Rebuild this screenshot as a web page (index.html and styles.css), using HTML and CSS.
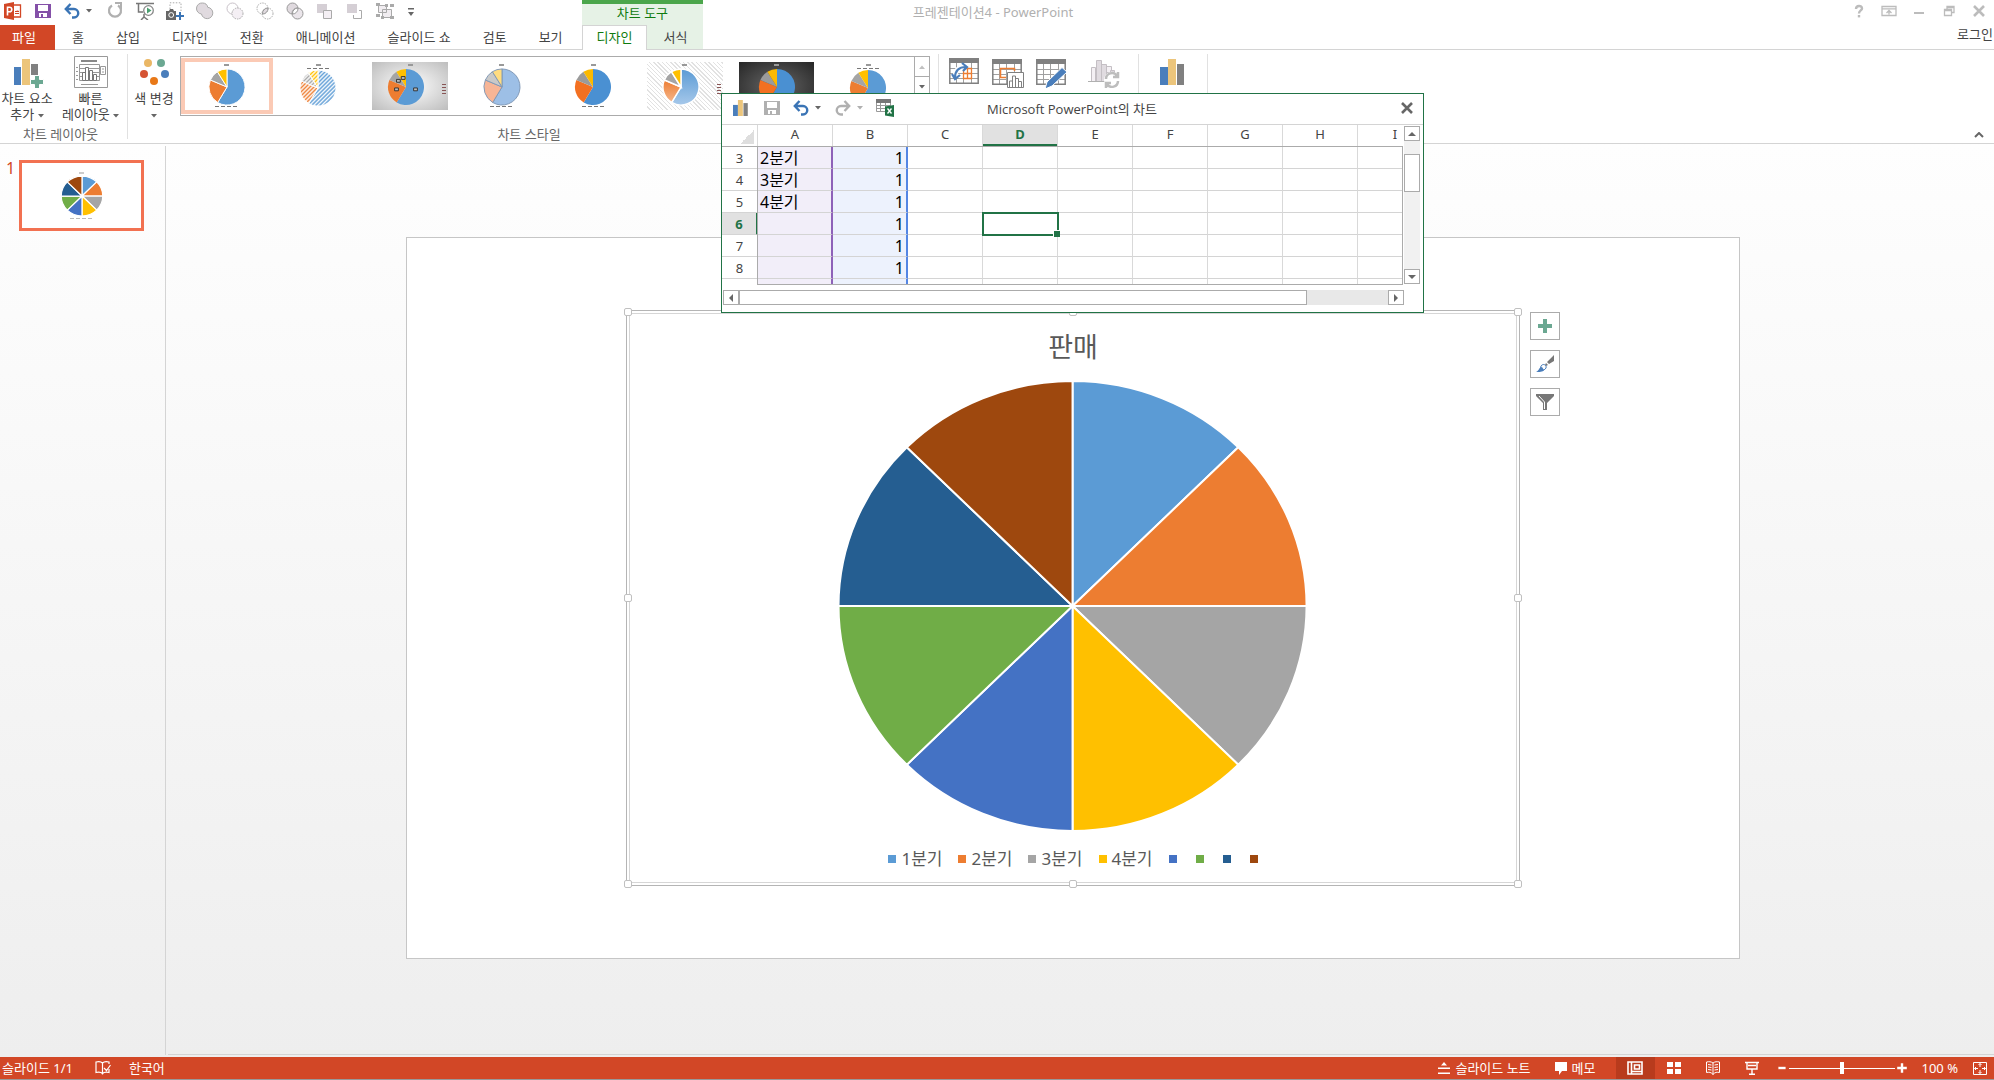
FILE: index.html
```html
<!DOCTYPE html>
<html lang="ko">

<head>
    <meta charset="UTF-8">
    <meta name="viewport" content="width=device-width, initial-scale=1.0">
    <title>프레젠테이션4 - PowerPoint</title>
    <link rel="stylesheet" href="styles.css">
</head>

<body>

    <!-- 공용 아이콘 -->
    <svg class="defs" aria-hidden="true">
        <defs>
            <linearGradient id="softBlue" x1="0" y1="0" x2="0" y2="1">
                <stop offset="0" stop-color="#5b9bd5" />
                <stop offset="1" stop-color="#a6c8ea" />
            </linearGradient>
            <linearGradient id="softOrange" x1="0" y1="0" x2="0" y2="1">
                <stop offset="0" stop-color="#ed7d31" />
                <stop offset="1" stop-color="#f5b78e" />
            </linearGradient>
            <pattern id="stripes" width="3" height="3" patternUnits="userSpaceOnUse" patternTransform="rotate(45)">
                <rect width="1.5" height="3" fill="#fff" />
            </pattern>
        </defs>
        <symbol id="pie4" viewBox="-20 -20 40 40">
            <path class="s1" d="M0 0V-19A19 19 0 1 1-9.8 16.3Z" />
            <path class="s2" d="M0 0-9.8 16.3A19 19 0 0 1-17.5-7.4Z" />
            <path class="s3" d="M0 0-17.5-7.4A19 19 0 0 1-10.1-16.1Z" />
            <path class="s4" d="M0 0-10.1-16.1A19 19 0 0 1 0-19Z" />
        </symbol>
        <symbol id="pie8" viewBox="-233 -224 466 448">
            <g stroke="#fff" stroke-linejoin="round">
                <path fill="#5b9bd5" d="M0 0V-224A233 224 0 0 1 165-158Z" />
                <path fill="#ed7d31" d="M0 0 165-158A233 224 0 0 1 233 0Z" />
                <path fill="#a5a5a5" d="M0 0H233A233 224 0 0 1 165 158Z" />
                <path fill="#ffc000" d="M0 0 165 158A233 224 0 0 1 0 224Z" />
                <path fill="#4472c4" d="M0 0V224A233 224 0 0 1-165 158Z" />
                <path fill="#70ad47" d="M0 0-165 158A233 224 0 0 1-233 0Z" />
                <path fill="#255e91" d="M0 0H-233A233 224 0 0 1-165-158Z" />
                <path fill="#9e480e" d="M0 0-165-158A233 224 0 0 1 0-224Z" />
            </g>
        </symbol>
        <symbol id="bars" viewBox="0 0 26 26">
            <path fill="#4a7ebb" d="M0 8h8v18H0z" />
            <path fill="#ecc57b" d="M8 0h8v26H8z" />
            <path fill="#808080" d="M17 5h7v21h-7z" />
        </symbol>
        <symbol id="save" viewBox="0 0 16 16">
            <path fill="currentColor" fill-rule="evenodd" d="M0 1h16v14H0zM3 2v6h10V2zM4 10v4h2v-3h2v3h4v-4z" />
        </symbol>
        <symbol id="undo" viewBox="0 0 16 16">
            <path fill="none" stroke="currentColor" stroke-width="2.4" d="M1.500 6H10a4 4 0 0 1 0 8.500H8M6.500 1 1.800 6l4.700 5" />
        </symbol>
        <symbol id="caret" viewBox="0 0 6 4">
            <path fill="currentColor" d="M0 0h6L3 3.500z" />
        </symbol>
        <symbol id="cross" viewBox="0 0 12 12">
            <path fill="none" stroke="currentColor" stroke-width="2.600" d="m1 1 10 10M11 1 1 11" />
        </symbol>
        <symbol id="grid" viewBox="0 0 30 26">
            <path fill="#fff" d="M0 0h30v26H0z" />
            <path fill="none" stroke="#a0a0a0" d="M7.500 5v20M14.500 5v20M22.500 5v20M1 10.500h28M1 15.500h28M1 20.500h28" />
            <path fill="none" stroke="#808080" stroke-width="1.500" d="M.8.800h28.400v24.400H.8z" />
            <path fill="#808080" d="M0 0h30v5H0z" />
        </symbol>
    </svg>

    <!-- 제목 표시줄과 탭 -->
    <header class="header">
        <div class="quick-access">
            <svg class="icon" viewBox="0 0 18 18">
                <path fill="#fff" stroke="#d24726" stroke-width="1.300" d="M9 3h7.500v12H9z" />
                <path stroke="#d24726" d="M11 9.500h4M11 11.500h4" />
                <path fill="#d24726" d="M12 5v3h3a3 3 0 0 1-3 0M0 2l10-2v18L0 16z" />
                <path fill="none" stroke="#fff" stroke-width="1.600" d="M3.500 13.500V5.200h2a2.200 2.200 0 0 1 0 4.600h-2" />
            </svg>
            <button class="tool purple" aria-label="저장"><svg class="icon"><use href="#save" /></svg></button>
            <button class="tool undo blue" aria-label="실행 취소"><svg class="icon"><use href="#undo" /></svg><svg class="caret"><use href="#caret" /></svg></button>
            <button class="tool gray" aria-label="다시 실행"><svg class="icon" viewBox="0 0 18 18"><path fill="none" stroke="currentColor" stroke-width="2.200" d="M6 3.500a6 6 0 1 0 6 0" /><path fill="currentColor" d="M9 0h7v7h-2V2H9z" /></svg></button>
            <button class="tool" aria-label="처음부터 시작"><svg class="icon" viewBox="0 0 18 18"><path fill="none" stroke="#777" stroke-width="1.500" d="M0 1.500h18M2.500 2v8H7M8 12v3l-3 3M8 15l4 3" /><circle cx="12.500" cy="8.500" r="4.800" fill="#fff" stroke="#888" stroke-width="1.300" /><path fill="#4c9f70" d="m11 5.500 4.500 3-4.500 3z" /></svg></button>
            <button class="tool" aria-label="스크린샷"><svg class="icon" viewBox="0 0 18 18"><path fill="none" stroke="#aaa" stroke-dasharray="1.500 1.500" d="M4 7V.800h11V9" /><path fill="#666" d="M0 9h3l1-2h3l1 2h2v9H0z" /><circle cx="5.200" cy="13" r="2.400" fill="#666" stroke="#fff" /><path fill="#3a74b5" d="M13 10h2v3h3v2h-3v3h-2v-3h-3v-2h3z" /></svg></button>
            <button class="tool" aria-label="도형 병합"><svg class="icon" viewBox="0 0 18 18"><path fill="#e0dadf" stroke="#aaa" d="M6.500 1a5.500 5.500 0 0 1 5.300 4.300A5.700 5.700 0 1 1 5.500 12 5.500 5.500 0 0 1 6.500 1z" /></svg></button>
            <button class="tool" aria-label="도형 결합"><svg class="icon" viewBox="0 0 18 18"><circle cx="6.500" cy="6.500" r="5.500" fill="none" stroke="#c9c2c9" /><circle cx="11.500" cy="11.500" r="5.500" fill="#f4eff4" stroke="#aaa" stroke-dasharray="1.500 1" /></svg></button>
            <button class="tool" aria-label="도형 교차"><svg class="icon" viewBox="0 0 18 18"><circle cx="6.500" cy="6.500" r="5.500" fill="none" stroke="#aaa" stroke-dasharray="1.500 1" /><circle cx="11.500" cy="11.500" r="5.500" fill="none" stroke="#aaa" stroke-dasharray="1.500 1" /><path fill="#e0dadf" stroke="#999" d="M6.500 12A5.500 5.500 0 0 1 12 6a5.500 5.500 0 0 1-5.500 6z" /></svg></button>
            <button class="tool" aria-label="도형 빼기"><svg class="icon" viewBox="0 0 18 18"><circle cx="6.500" cy="6.500" r="5.500" fill="#e0dadf" stroke="#999" /><circle cx="11.500" cy="11.500" r="5.500" fill="#ebe6eb" stroke="#999" /><path fill="#fff" stroke="#999" d="M6.500 12A5.500 5.500 0 0 1 12 6a5.500 5.500 0 0 1-5.500 6z" /></svg></button>
            <button class="tool" aria-label="앞으로 가져오기"><svg class="icon" viewBox="0 0 18 18"><path fill="#d5cfd5" d="M1 2h10v9H1z" /><path fill="#f4eff4" stroke="#aaa" d="M7.500 8.500h8v8h-8z" /></svg></button>
            <button class="tool" aria-label="뒤로 보내기"><svg class="icon" viewBox="0 0 18 18"><path fill="#d5cfd5" d="M1 2h10v9H1z" /><path fill="none" stroke="#aaa" d="M13 8.500h2.500v8h-8V13" /></svg></button>
            <button class="tool" aria-label="그룹"><svg class="icon" viewBox="0 0 18 18"><path fill="#f1edf1" stroke="#aaa" d="M2.500 3.500h8v7h-8zM6.500 7.500h9v8h-9z" /><path fill="#aaa" d="M0 1h4v3H0zM14 2h4v3h-4zM0 12h4v3H0zM5 14h3v3H5zM14 14h4v3h-4zM9 2h3v3H9z" /></svg></button>
            <button class="tool dark" aria-label="빠른 실행 도구 모음 사용자 지정"><svg class="icon" viewBox="0 0 18 18"><path fill="currentColor" d="M6 6h6v1.500H6zM6 10h6l-3 4z" /></svg></button>
        </div>
        <div class="context-title">차트 도구</div>
        <h1 class="window-title">프레젠테이션4 - PowerPoint</h1>
        <div class="window-controls">
            <button class="tool" aria-label="도움말"><svg class="icon" viewBox="0 0 18 18"><path fill="none" stroke="currentColor" stroke-width="2.400" d="M6 7c0-4 6-4 6-.5 0 2-3 2-3 5" /><path fill="currentColor" d="M7.800 13h2.400v2.400H7.800z" /></svg></button>
            <button class="tool" aria-label="리본 메뉴 표시 옵션"><svg class="icon" viewBox="0 0 18 18"><path fill="none" stroke="currentColor" stroke-width="1.300" d="M2 4.500h14v9H2zM2 6.800h14M9 12.500V9M6.500 11 9 8.500l2.500 2.500" /></svg></button>
            <button class="tool" aria-label="최소화"><svg class="icon" viewBox="0 0 18 18"><path fill="currentColor" d="M4 10h10v2H4z" /></svg></button>
            <button class="tool" aria-label="이전 크기로"><svg class="icon" viewBox="0 0 18 18"><path fill="none" stroke="currentColor" stroke-width="1.300" d="M4.500 7.500h7v6h-7zM4.500 8.500h7M7 7V4.500h7v6h-2M7 5.500h7" /></svg></button>
            <button class="tool" aria-label="닫기"><svg class="close"><use href="#cross" /></svg></button>
        </div>
        <nav class="tabs">
            <a href="#" class="file">파일</a>
            <a href="#">홈</a>
            <a href="#">삽입</a>
            <a href="#">디자인</a>
            <a href="#">전환</a>
            <a href="#">애니메이션</a>
            <a href="#">슬라이드 쇼</a>
            <a href="#">검토</a>
            <a href="#">보기</a>
        </nav>
        <nav class="tabs context-tabs">
            <a href="#" class="active">디자인</a>
            <a href="#">서식</a>
        </nav>
        <a href="#" class="login">로그인</a>
    </header>

    <!-- 리본 메뉴 -->
    <section class="ribbon">
        <div class="group layout-group">
            <div class="group-items">
                <button class="big add-element">
                    <svg viewBox="0 0 32 32"><path fill="#4a7ebb" d="M3 11h7v18H3z" /><path fill="#ecc57b" d="M11 3h8v26h-8z" /><path fill="#808080" d="M20 8h7v11h-7z" /><path fill="#6ba892" stroke="#fff" d="M23.500 19.500h5v4h4v5h-4v4h-5v-4h-4v-5h4z" /></svg>
                    <span>차트 요소<br>추가 <svg class="caret"><use href="#caret" /></svg></span>
                </button>
                <button class="big quick-layout">
                    <svg viewBox="0 0 34 32"><path fill="#fff" stroke="#999" d="M.5.500h33v31H.5z" /><path stroke="#888" stroke-width="2" d="M7 5h16" /><path fill="none" stroke="#999" d="M5.500 8.500h20v16h-20zM6 12.500h19M6 16.500h19M6 20.500h19M2 11.500h2M2 15.500h2M2 19.500h2M2 23.500h2M7 28.500h17M26.500 10.500h5v8h-5zM28 13h2M28 16h2" /><path fill="#fff" stroke="#777" d="M8.500 16.500h3v8h-3zM11.500 11.500h3v13h-3zM15.500 14.500h3v10h-3zM19.500 18.500h3v6h-3z" /></svg>
                    <span>빠른<br>레이아웃 <svg class="caret"><use href="#caret" /></svg></span>
                </button>
            </div>
            <h2>차트 레이아웃</h2>
        </div>
        <span class="separator"></span>
        <div class="group style-group">
            <div class="group-items">
                <button class="big change-color">
                    <svg viewBox="0 0 32 32"><circle cx="10" cy="7" r="4" fill="#eab765" /><circle cx="23" cy="7" r="4" fill="#6ba892" /><circle cx="6" cy="18" r="4" fill="#d55434" /><circle cx="27" cy="18" r="4" fill="#4a7ebb" /><circle cx="16" cy="25" r="4" fill="#e87817" /></svg>
                    <span>색 변경<br><svg class="caret"><use href="#caret" /></svg></span>
                </button>
                <div class="gallery">
                    <button class="style selected" aria-label="스타일 1">
                        <i class="mini-title"></i><svg class="pie"><use href="#pie4" /></svg><i class="mini-legend"></i>
                    </button>
                    <button class="style" aria-label="스타일 2">
                        <i class="mini-title"></i><i class="mini-legend"></i><svg class="pie" viewBox="-20 -20 40 40"><use href="#pie4" x="-20" y="-20" width="40" height="40" /><circle r="20" fill="url(#stripes)" /></svg>
                    </button>
                    <button class="style silver" aria-label="스타일 3">
                        <i class="mini-title"></i><svg class="pie flat" viewBox="-20 -20 40 40"><use href="#pie4" x="-20" y="-20" width="40" height="40" /><path fill="#bbb" stroke="#333" d="M8 1h4v3H8zM-12 1h4v3h-4zM-10-8h4v3h-4zM-5-11h4v3h-4z" /></svg><i class="side-legend"></i>
                    </button>
                    <button class="style" aria-label="스타일 4">
                        <i class="mini-title"></i><svg class="pie pale"><use href="#pie4" /></svg><i class="mini-legend"></i>
                    </button>
                    <button class="style" aria-label="스타일 5">
                        <i class="mini-title"></i><svg class="pie vivid"><use href="#pie4" /></svg><i class="mini-legend"></i>
                    </button>
                    <button class="style hatched" aria-label="스타일 6">
                        <i class="mini-title"></i><svg class="pie" viewBox="-20 -20 40 40"><g stroke="#fff" stroke-width="1.500"><path fill="url(#softBlue)" d="M0 0V-19A19 19 0 1 1-9.800 16.300Z" /><path fill="url(#softOrange)" d="M0 0-9.800 16.300A19 19 0 0 1-17.500-7.400Z" /><path fill="#a5a5a5" d="M0 0-17.500-7.400A19 19 0 0 1-10.100-16.100Z" /><path fill="#ffc000" d="M0 0-10.100-16.100A19 19 0 0 1 0-19Z" /></g></svg><i class="side-legend"></i>
                    </button>
                    <button class="style black" aria-label="스타일 7">
                        <i class="mini-title"></i><svg class="pie vivid"><use href="#pie4" /></svg>
                    </button>
                    <button class="style" aria-label="스타일 8">
                        <i class="mini-title"></i><i class="mini-legend"></i><svg class="pie flat"><use href="#pie4" /></svg>
                    </button>
                    <div class="gallery-scroll">
                        <button class="up" aria-label="위로"><svg class="caret"><use href="#caret" /></svg></button>
                        <button aria-label="아래로"><svg class="caret"><use href="#caret" /></svg></button>
                        <button aria-label="자세히"></button>
                    </div>
                </div>
            </div>
            <h2>차트 스타일</h2>
        </div>
        <span class="separator"></span>
        <div class="group data-group">
            <div class="group-items">
                <button class="big" aria-label="행/열 전환"><svg viewBox="0 0 32 32"><use href="#grid" x="1" y="2" width="30" height="26" /><path fill="none" stroke="#ed7d31" stroke-width="1.300" d="M15.500 12.500h8v10h-8zM16 17.500h7M19.500 13v9" /><path fill="none" stroke="#fff" stroke-width="5" d="M7 21c0-7 4-10 11-10" /><path fill="none" stroke="#4a7ebb" stroke-width="2.200" d="M7 22c0-8 4-11 11-11M4 18l3 5 5-4M14 7l5 4-4 4" /></svg></button>
                <button class="big" aria-label="데이터 선택"><svg viewBox="0 0 32 32"><use href="#grid" x="0" y="3" width="30" height="26" /><path fill="none" stroke="#ed7d31" stroke-width="1.500" d="M14 21.500H8.500v-9h14V15" /><path fill="#fff" stroke="#808080" d="M15.500 16.500h16v15h-16z" /><path fill="none" stroke="#808080" d="M17.500 31v-6h3v6M20.500 31V20h3v11M23.500 22.500h3V31M26.500 25.500h3V31" /></svg></button>
                <button class="big" aria-label="데이터 편집"><svg viewBox="0 0 32 32"><use href="#grid" x="0" y="3" width="30" height="26" /><path fill="#4a7ebb" stroke="#fff" d="M26 11.500 31 16 16 30l-7 3 2-7z" /></svg></button>
                <button class="big wide" aria-label="데이터 새로 고침"><svg viewBox="0 0 32 32"><path fill="#f4f0f4" stroke="#c4bfc4" d="M3.500 11.500h4v14h-4zM18.500 10.500h5v6h-5z" /><path fill="#e0dbe0" stroke="#c4bfc4" d="M8.500 4.500h5v21h-5zM13.500 8.500h5v17h-5zM22.500 14.500h4v4h-4z" /><path stroke="#b0b0b0" d="M0 25.500h19" /><circle cx="24" cy="24" r="8" fill="#fff" /><path fill="none" stroke="#bdbdbd" stroke-width="2.500" d="M18 23c0-6 8-8 11-3M30 16v5h-5M30 25c0 6-8 8-11 3M18 32v-5h5" /></svg></button>
            </div>
        </div>
        <span class="separator"></span>
        <div class="group type-group">
            <div class="group-items">
                <button class="big" aria-label="차트 종류 변경"><svg viewBox="0 0 32 32"><use href="#bars" x="3" y="3" width="26" height="26" /></svg></button>
            </div>
        </div>
        <span class="separator"></span>
        <button class="collapse" aria-label="리본 메뉴 축소"><svg viewBox="0 0 10 6"><path fill="none" stroke="currentColor" stroke-width="2" d="m1 5 4-4 4 4" /></svg></button>
    </section>

    <main class="workspace">
        <aside class="slides">
            <span class="slide-number">1</span>
            <button class="thumb" aria-label="슬라이드 1">
                <i class="mini-title"></i>
                <svg class="thumb-pie"><use href="#pie8" /></svg>
                <i class="mini-legend"></i>
            </button>
        </aside>

        <div class="canvas">
            <div class="slide">
                <section class="chart">
                    <h2>판매</h2>
                    <svg class="chart-pie" role="img" aria-label="판매 원형 차트"><use href="#pie8" /></svg>
                    <ul class="legend">
                        <li class="c1">1분기</li>
                        <li class="c2">2분기</li>
                        <li class="c3">3분기</li>
                        <li class="c4">4분기</li>
                        <li class="c5"></li>
                        <li class="c6"></li>
                        <li class="c7"></li>
                        <li class="c8"></li>
                    </ul>
                    <i class="handle top left"></i>
                    <i class="handle top center"></i>
                    <i class="handle top right"></i>
                    <i class="handle middle left"></i>
                    <i class="handle middle right"></i>
                    <i class="handle bottom left"></i>
                    <i class="handle bottom center"></i>
                    <i class="handle bottom right"></i>
                    <div class="chart-buttons">
                        <button aria-label="차트 요소"><svg viewBox="0 0 20 20"><path fill="#6ba892" d="M8 3h4v5h5v4h-5v5H8v-5H3V8h5z" /></svg></button>
                        <button aria-label="차트 스타일"><svg viewBox="0 0 20 20"><path fill="#777" d="M19 1v6l-5 3-2-2zM11 9l2 2-2 1-1-1z" /><path fill="#fff" stroke="#4a7ebb" d="M6 12c2-3 6-1 5 2-1 2-4 3-6 2z" /><path fill="#4a7ebb" d="M1 18c3-1 3-5 6-5l2 3c-1 2-5 2-8 2z" /></svg></button>
                        <button aria-label="차트 필터"><svg viewBox="0 0 20 20"><path fill="#777" d="M1 2h18v2l-7 7v7H8v-7L1 4z" /><path fill="none" stroke="#fff" d="m4 4 5.500 6v7" /></svg></button>
                    </div>
                </section>
            </div>
        </div>
    </main>

    <!-- 차트 데이터 창 -->
    <section class="data-window">
        <div class="data-title">
            <svg class="icon"><use href="#bars" /></svg>
            <button class="tool gray" aria-label="저장"><svg class="icon"><use href="#save" /></svg></button>
            <button class="tool undo blue" aria-label="실행 취소"><svg class="icon"><use href="#undo" /></svg><svg class="caret"><use href="#caret" /></svg></button>
            <button class="tool undo gray" aria-label="다시 실행"><svg class="icon flip"><use href="#undo" /></svg><svg class="caret"><use href="#caret" /></svg></button>
            <button class="tool excel" aria-label="Excel에서 데이터 편집"><svg class="icon" viewBox="0 0 18 18"><path fill="none" stroke="#999" d="M.5 1.500h14v11H.5zM4.500 4v8M9.500 4v8M1 6.500h13M1 9.500h13" /><path fill="#777" d="M0 0h15v4H0z" /><path fill="#217346" d="m9 7.500 9-1.500v12l-9-1.500z" /><path stroke="#fff" stroke-width="1.300" d="m11.500 9.500 4 5M15.500 9.500l-4 5" /></svg></button>
            <h2>Microsoft PowerPoint의 차트</h2>
            <button class="tool close-data" aria-label="닫기"><svg class="close"><use href="#cross" /></svg></button>
        </div>
        <div class="data-body">
            <div class="sheet">
                <table>
                    <thead>
                        <tr>
                            <th class="corner"></th>
                            <th>A</th>
                            <th>B</th>
                            <th>C</th>
                            <th class="current">D</th>
                            <th>E</th>
                            <th>F</th>
                            <th>G</th>
                            <th>H</th>
                            <th>I</th>
                        </tr>
                    </thead>
                    <tbody>
                        <tr><th>3</th><td class="category">2분기</td><td class="value">1</td><td></td><td></td><td></td><td></td><td></td><td></td><td></td></tr>
                        <tr><th>4</th><td class="category">3분기</td><td class="value">1</td><td></td><td></td><td></td><td></td><td></td><td></td><td></td></tr>
                        <tr><th>5</th><td class="category">4분기</td><td class="value">1</td><td></td><td></td><td></td><td></td><td></td><td></td><td></td></tr>
                        <tr><th class="current">6</th><td class="category"></td><td class="value">1</td><td></td><td class="cursor"></td><td></td><td></td><td></td><td></td><td></td></tr>
                        <tr><th>7</th><td class="category"></td><td class="value">1</td><td></td><td></td><td></td><td></td><td></td><td></td><td></td></tr>
                        <tr><th>8</th><td class="category"></td><td class="value">1</td><td></td><td></td><td></td><td></td><td></td><td></td><td></td></tr>
                        <tr><th></th><td class="category"></td><td class="value"></td><td></td><td></td><td></td><td></td><td></td><td></td><td></td></tr>
                    </tbody>
                </table>
            </div>
            <div class="scroll vertical">
                <button aria-label="위로"><svg viewBox="0 0 8 8"><path d="M0 6h8L4 2z" /></svg></button>
                <span class="knob"></span>
                <button aria-label="아래로"><svg viewBox="0 0 8 8"><path d="M0 2h8L4 6z" /></svg></button>
            </div>
        </div>
        <div class="scroll horizontal">
            <button aria-label="왼쪽"><svg viewBox="0 0 8 8"><path d="M6 0v8L2 4z" /></svg></button>
            <span class="knob"></span>
            <button aria-label="오른쪽"><svg viewBox="0 0 8 8"><path d="M2 0v8l4-4z" /></svg></button>
        </div>
    </section>

    <!-- 상태 표시줄 -->
    <footer class="status">
        <span>슬라이드 1/1</span>
        <button class="proof" aria-label="맞춤법 검사"><svg viewBox="0 0 16 16"><path fill="none" stroke="currentColor" stroke-width="1.200" d="M7.500 14.500V3C6 1.500 3 1.500 1 2v10.500c2-.5 5-.5 6.500 1M7.500 3C9 1.500 12 1.500 14 2v2M14 9v3.500c-2-.5-5-.5-6.500 1M9 8l2.500 2.500L15.500 5" /></svg></button>
        <button>한국어</button>
        <div class="status-right">
            <button class="notes"><svg viewBox="0 0 16 16"><path fill="currentColor" d="M8 2l3 3.500H5zM2 7.500h12V9H2zM2 12.500h12V14H2z" /></svg>슬라이드 노트</button>
            <button class="comments"><svg viewBox="0 0 16 16"><path fill="currentColor" d="M2 2h12v9H9l-3 4v-4H2z" /></svg>메모</button>
            <div class="views">
                <button class="active" aria-label="기본"><svg viewBox="0 0 16 16"><path fill="none" stroke="currentColor" stroke-width="1.600" d="M1 2h14v12H1zM4.500 2v12M7.500 5h5v4h-5zM5 11.500h10" /></svg></button>
                <button aria-label="여러 슬라이드"><svg viewBox="0 0 16 16"><path fill="currentColor" d="M1 2h6v5H1zM9 2h6v5H9zM1 9h6v5H1zM9 9h6v5H9z" /></svg></button>
                <button aria-label="읽기용 보기"><svg viewBox="0 0 16 16"><path fill="none" stroke="currentColor" d="M8 14.500V3C6 1.500 4 1.500 1.500 2v10.500c2.500-.5 4.500-.5 6.500 2 2-2.500 4-2.500 6.500-2V2C12 1.500 10 1.500 8 3M3 4.500l3.500.500M3 7l3.500.500M3 9.500l3.500.500M13 4.500 9.500 5M13 7l-3.500.500M13 9.500 9.500 10" /></svg></button>
                <button aria-label="슬라이드 쇼"><svg viewBox="0 0 16 16"><path fill="none" stroke="currentColor" stroke-width="1.400" d="M1 2.500h14M3 3v6h10V3M8 9v5M5 14.300h6M4 5.500h8" /></svg></button>
            </div>
            <button class="zoom-step" aria-label="축소"><svg viewBox="0 0 10 10"><path fill="currentColor" d="M2 4h6v2H2z" /></svg></button>
            <input type="range" class="zoom" min="0" max="200" value="100" aria-label="확대/축소">
            <button class="zoom-step" aria-label="확대"><svg viewBox="0 0 10 10"><path fill="currentColor" d="M4 1h2v3h3v2H6v3H4V6H1V4h3z" /></svg></button>
            <button class="percent">100 %</button>
            <button class="fit" aria-label="창에 맞춤"><svg viewBox="0 0 16 16"><path fill="none" stroke="currentColor" d="M1.500 2.500h13v12h-13zM8 3.500V7M8 10v3.500M2.500 8.500H6M10 8.500h3.500M6.500 5 8 3.500 9.500 5M6.500 12 8 13.500 9.500 12M4 7 2.500 8.500 4 10M12 7l1.500 1.500L12 10" /></svg></button>
        </div>
    </footer>

</body>

</html>
```

FILE: styles.css
```css
/* RESET */
* {
    margin: 0;
    padding: 0;
    box-sizing: border-box;
}

body {
    display: flex;
    flex-direction: column;
    height: 100vh;
    overflow: hidden;
    font-family: "Noto Sans", "Noto Sans CJK KR", sans-serif;
    font-size: 13px;
    line-height: 16px;
    color: #444;
    background: #fff;
}

button {
    font: inherit;
    color: inherit;
    background: none;
    border: none;
    cursor: pointer;
}

a {
    color: inherit;
    text-decoration: none;
}

h1,
h2 {
    font-size: 13px;
    font-weight: 400;
}

svg {
    display: block;
    flex: none;
}

.defs {
    position: absolute;
    width: 0;
    height: 0;
}

.icon {
    width: 18px;
    height: 18px;
}

.caret {
    width: 6px;
    height: 4px;
    color: #666;
}

.close {
    width: 12px;
    height: 12px;
}

.tool {
    display: flex;
    align-items: center;
    justify-content: center;
    width: 30px;
    height: 24px;
}

.tool.undo {
    gap: 6px;
    width: 42px;
    padding-right: 2px;
}

.purple { color: #8450a8; }
.blue { color: #3a74b5; }
.gray,
.gray .caret { color: #b0b0b0; }
.dark { color: #666; }

/* HEADER */
.header {
    display: grid;
    grid-template-columns: auto auto 1fr auto;
    grid-template-rows: 25px 25px;
    background: linear-gradient(#d4d4d4, #d4d4d4) bottom / 100% 1px no-repeat;
}

.quick-access {
    grid-area: 1 / 1;
    display: flex;
    align-items: center;
    height: 22px;
    padding-left: 4px;
}

.quick-access > .icon {
    margin-right: 6px;
}

.quick-access .tool:last-child {
    margin-left: -4px;
}

.quick-access .purple .icon,
.quick-access .undo .icon {
    width: 16px;
    height: 16px;
}

.context-title {
    grid-area: 1 / 2;
    padding-top: 1px;
    border-top: 4px solid #4ba64b;
    background: #e6f2e6;
    color: #0f7b0f;
    text-align: center;
}

.window-title {
    grid-area: 1 / 1 / 2 / -1;
    justify-self: center;
    padding: 4px 8px 0 0;
    color: #b0b0b0;
}

.window-controls {
    grid-area: 1 / 4;
    display: flex;
    align-items: center;
    height: 22px;
    color: #bcbcbc;
}

.tabs {
    display: flex;
    margin-right: 3px;
}

.tabs a {
    padding: 4px 16px;
}

.tabs .file {
    width: 55px;
    margin-right: 1px;
    padding: 4px 12px;
    background: #d24726;
    color: #fff;
}

.context-tabs {
    margin: 0 0 1px;
    background: #e6f2e6;
}

.context-tabs .active {
    margin-bottom: -1px;
    padding: 3px 14px;
    border: 1px solid #d4d4d4;
    border-bottom: none;
    background: #fff;
    color: #0f7b0f;
}

.login {
    grid-column: 3 / -1;
    justify-self: end;
    padding: 1px 1px 0 0;
}

/* RIBBON */
.ribbon {
    display: flex;
    height: 94px;
    border-bottom: 1px solid #d4d4d4;
}

.group {
    display: flex;
    flex-direction: column;
    justify-content: space-between;
    padding-top: 6px;
}

.group-items {
    display: flex;
}

.group h2 {
    line-height: 18px;
    color: #666;
    text-align: center;
}

.layout-group h2 {
    padding-right: 6px;
}

.style-group {
    padding-right: 8px;
}

.separator {
    width: 1px;
    margin: 4px 0;
    background: #e1e1e1;
}

.big {
    display: flex;
    flex-direction: column;
    align-items: center;
    gap: 2px;
    width: 44px;
    white-space: nowrap;
}

.big > svg {
    height: 32px;
    width: 34px;
}

.big span .caret {
    display: inline-block;
    vertical-align: middle;
}

.big.add-element { width: 54px; }
.big.quick-layout { width: 73px; }
.big.change-color { width: 52px; }
.big.wide { width: 60px; }

.data-group { width: 199px; padding-left: 3px; }
.type-group { width: 68px; padding-left: 12px; }

.gallery {
    display: grid;
    grid-template-columns: repeat(8, 1fr) 15px;
    width: 750px;
    height: 60px;
    border: 1px solid #ababab;
}

.style {
    display: flex;
    flex-direction: column;
    align-items: center;
    position: relative;
    margin: 5px 8px;
    overflow: hidden;
}

.style.selected {
    margin: 1px 0;
    border: 4px solid #fbcab5;
}

.pie {
    width: 40px;
    height: 38px;
    stroke: #fff;
}

.style > i:first-child {
    margin: 2px 0;
}

.s1 { fill: var(--s1, #5b9bd5); }
.s2 { fill: var(--s2, #ed7d31); }
.s3 { fill: var(--s3, #a5a5a5); }
.s4 { fill: var(--s4, #ffc000); }

.pie.flat {
    stroke: none;
}

.pie.pale {
    --s1: #9dbfe6;
    --s2: #f7b596;
    --s3: #c9c9c9;
    --s4: #ffdc80;
    stroke: #7f98b5;
}

.pie.vivid {
    --s1: #4a90d2;
    --s2: #f37021;
    --s3: #9b9b9b;
    --s4: #fbb900;
    stroke: none;
}

.silver {
    background: radial-gradient(#fff, #bdbdbd);
}

.silver .pie,
.hatched .pie {
    margin-right: 8px;
}

.hatched {
    background: repeating-linear-gradient(45deg, #fff 0 2px, #e2e2e2 2px 3px);
}

.black {
    background: radial-gradient(#666, #262626);
}

.mini-title {
    flex: none;
    width: 5px;
    height: 2px;
    background: #999;
}

.mini-legend {
    flex: none;
    width: 23px;
    height: 1px;
    background: repeating-linear-gradient(90deg, #777 0 4px, transparent 4px 6px);
}

.side-legend {
    position: absolute;
    right: 2px;
    top: 22px;
    width: 4px;
    height: 10px;
    background: repeating-linear-gradient(#855 0 1px, transparent 1px 3px);
}

.gallery-scroll {
    display: grid;
    grid-template-rows: 20px 20px 18px;
    border-left: 1px solid #ababab;
}

.gallery-scroll button {
    display: grid;
    place-items: center;
    border-bottom: 1px solid #ababab;
}

.gallery-scroll .up .caret {
    color: #c0c0c0;
    transform: rotate(180deg);
}

.collapse {
    align-self: flex-end;
    margin: 0 10px 5px auto;
    color: #666;
}

.collapse svg {
    width: 10px;
    height: 6px;
}

/* WORKSPACE */
.workspace {
    display: flex;
    flex: 1;
    padding: 2px 0;
    background: linear-gradient(#fefefe, #eee);
}

.slides {
    display: flex;
    align-items: flex-start;
    gap: 4px;
    width: 166px;
    padding: 14px 0 0 6px;
    border-right: 1px solid #d4d4d4;
}

.slide-number {
    font-size: 16px;
    color: #d24726;
}

.thumb {
    display: flex;
    flex-direction: column;
    align-items: center;
    width: 125px;
    height: 71px;
    padding-top: 9px;
    border: 3px solid #f27151;
    background: #fff;
}

.thumb .mini-title,
.thumb .mini-legend {
    opacity: .5;
}

.thumb-pie {
    width: 42px;
    height: 40px;
    margin: 2px 0;
    stroke-width: 14px;
}

.canvas {
    display: grid;
    place-items: center;
    flex: 1;
    margin-left: 2px;
    padding: 0 19px 4px 3px;
    border-bottom: 1px solid #d4d4d4;
}

.slide {
    display: grid;
    place-items: center;
    width: 74%;
    aspect-ratio: 1335 / 722;
    border: 1px solid #c6c6c6;
    background: #fff;
}

/* CHART */
.chart {
    display: flex;
    flex-direction: column;
    align-items: center;
    position: relative;
    width: 67%;
    height: 80%;
    padding: 18px 0 14px;
    border: 1px solid #b5b5b5;
    box-shadow: inset 0 0 0 2px #fff, inset 0 0 0 3px #d6d6d6;
}

.chart h2 {
    font-size: 27px;
    line-height: 36px;
    color: #595959;
}

.chart-pie {
    flex: 1;
    width: 100%;
    min-height: 0;
    margin: 16px 0;
    stroke-width: 2px;
}

.legend {
    display: flex;
    gap: 16px;
    height: 24px;
    font-size: 17px;
    line-height: 24px;
    color: #595959;
    list-style: none;
}

.legend li {
    display: flex;
    align-items: center;
    gap: 5px;
}

.legend li::before {
    content: "";
    width: 8px;
    height: 8px;
    background: var(--color);
}

.legend li:empty:not(:last-child)::before {
    margin-right: 3px;
}

.c1 { --color: #5b9bd5; }
.c2 { --color: #ed7d31; }
.c3 { --color: #a5a5a5; }
.c4 { --color: #ffc000; }
.c5 { --color: #4472c4; }
.c6 { --color: #70ad47; }
.c7 { --color: #255e91; }
.c8 { --color: #9e480e; }

.handle {
    position: absolute;
    width: 8px;
    height: 8px;
    border: 1px solid #c0c0c0;
    border-radius: 2px;
    background: #fff;
}

.handle.top { top: -3px; }
.handle.middle { top: calc(50% - 4px); }
.handle.bottom { bottom: -3px; }
.handle.left { left: -3px; }
.handle.center { left: calc(50% - 4px); }
.handle.right { right: -3px; }

.chart-buttons {
    display: flex;
    flex-direction: column;
    gap: 10px;
    position: absolute;
    top: 1px;
    left: calc(100% + 11px);
}

.chart-buttons button {
    display: grid;
    place-items: center;
    width: 30px;
    height: 28px;
    border: 1px solid #ababab;
    background: #fff;
}

.chart-buttons svg {
    width: 20px;
    height: 20px;
}

/* DATA WINDOW */
.data-window {
    position: absolute;
    left: 721px;
    top: 93px;
    width: 703px;
    border: 1px solid #217346;
    background: #fff;
}

.data-title {
    display: flex;
    align-items: center;
    position: relative;
    height: 31px;
    padding: 0 4px 2px 11px;
    border-bottom: 1px solid #d4d4d4;
}

.data-title .icon {
    width: 16px;
    height: 16px;
}

.data-title > .icon {
    margin-right: 8px;
}

.data-title .excel {
    justify-content: flex-start;
    padding-left: 5px;
}

.data-title .excel .icon {
    width: 18px;
    height: 18px;
}

.data-title h2 {
    flex: 1;
    padding: 2px 152px 0 0;
    font-family: "Open Sans", "Noto Sans CJK KR", sans-serif;
    text-align: center;
}

.data-title .close-data {
    color: #666;
    width: 24px;
}

.flip {
    transform: scaleX(-1);
}

.data-body {
    display: flex;
    justify-content: space-between;
    padding-right: 3px;
}

.sheet {
    position: relative;
    width: 681px;
    height: 160px;
    overflow: hidden;
}

.sheet::after {
    content: "";
    position: absolute;
    inset: 21px 0 0 35px;
    border: 1px solid #ababab;
    pointer-events: none;
}

.sheet table {
    width: 711px;
    table-layout: fixed;
    border-collapse: separate;
    border-spacing: 0;
}

.sheet th,
.sheet td {
    width: 75px;
    height: 22px;
    border-right: 1px solid #d9d9d9;
    border-bottom: 1px solid #d4d4d4;
    font-size: 16px;
    line-height: 20px;
    color: #000;
}

.sheet th {
    font-size: 13px;
    font-weight: 400;
    color: #444;
}

.sheet th:first-child {
    width: 36px;
}

.sheet thead th {
    padding-bottom: 3px;
    border-bottom-color: #ababab;
    line-height: 18px;
}

.sheet .corner {
    background: linear-gradient(135deg, transparent 50%, #dedede 50%) 18px 5px / 14px 14px no-repeat;
}

.sheet th.current {
    background: #e1e1e1;
    font-weight: 700;
    color: #217346;
}

.sheet thead th.current {
    box-shadow: inset 0 -2px #217346;
}

.sheet tbody th.current {
    border-right: 2px solid #217346;
}

.sheet .category {
    padding-left: 2px;
    border-right: 2px solid #8e62b8;
    background: #f2eef9;
}

.sheet .value {
    padding-right: 2px;
    border-right: 2px solid #5486e4;
    background: #edf2fd;
    text-align: right;
}

.sheet .cursor {
    position: relative;
    outline: 2px solid #217346;
    outline-offset: -1px;
}

.sheet .cursor::after {
    content: "";
    position: absolute;
    right: -3px;
    bottom: -3px;
    width: 6px;
    height: 6px;
    border: 1px solid #fff;
    border-width: 1px 0 0 1px;
    background: #217346;
}

.scroll {
    display: flex;
    background: #f1f1f1;
}

.scroll button {
    display: grid;
    place-items: center;
    width: 16px;
    height: 15px;
    border: 1px solid #ababab;
    background: #fff;
}

.scroll svg {
    width: 8px;
    height: 8px;
    fill: #666;
}

.knob {
    border: 1px solid #ababab;
    background: #fff;
}

.scroll.vertical {
    flex-direction: column;
    width: 16px;
    margin: 1px 0;
}

.scroll.vertical .knob {
    height: 38px;
    margin: 13px 0 auto;
}

.scroll.horizontal {
    margin: 5px 19px 7px 1px;
    background: #e8e8e8;
}

.scroll.horizontal .knob {
    width: 568px;
    margin-right: auto;
}

/* STATUS BAR */
.status {
    display: flex;
    align-items: center;
    flex: none;
    height: 23px;
    padding: 0 6px 0 2px;
    border-bottom: 1px solid #999;
    background: #d24726;
    color: #fff;
}

.status button {
    display: flex;
    align-items: center;
    justify-content: center;
    gap: 3px;
    height: 22px;
    white-space: nowrap;
}

.status svg {
    width: 16px;
    height: 16px;
}

.status .proof {
    margin: 0 18px 0 22px;
}

.status-right {
    display: flex;
    align-items: center;
    margin-left: auto;
}

.comments {
    margin: 0 20px 0 22px;
}

.views {
    display: flex;
    margin-right: 4px;
}

.views button {
    width: 39px;
}

.views .active {
    background: #b83b1d;
}

.status .zoom-step svg {
    width: 12px;
    height: 12px;
}

.zoom {
    width: 106px;
    height: 12px;
    margin: 0 1px;
    appearance: none;
    background: linear-gradient(#fff, #fff) center / 100% 1px no-repeat;
}

.zoom::-webkit-slider-thumb {
    appearance: none;
    width: 4px;
    height: 12px;
    background: #fff;
}

.percent {
    margin: 0 14px;
}
```
